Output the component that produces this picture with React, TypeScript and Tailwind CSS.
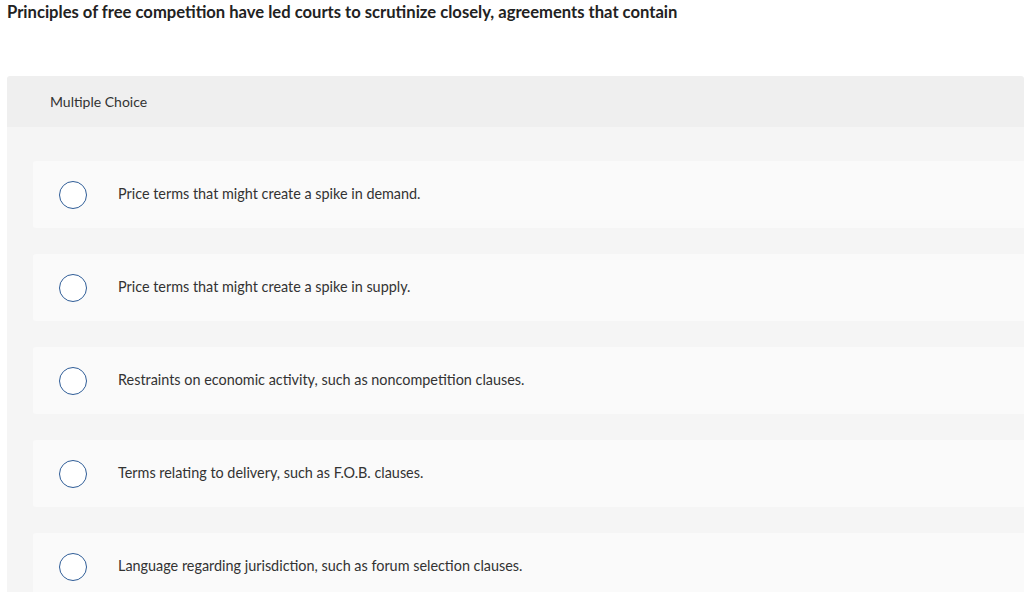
const options = [
  "Price terms that might create a spike in demand.",
  "Price terms that might create a spike in supply.",
  "Restraints on economic activity, such as noncompetition clauses.",
  "Terms relating to delivery, such as F.O.B. clauses.",
  "Language regarding jurisdiction, such as forum selection clauses.",
]

export default function App() {
  return (
    <div className="min-h-screen bg-white font-['Lato',sans-serif] text-[#333]">
      <h1 className="px-[7px] pt-[2px] text-[16.6px] font-bold leading-[20px] text-[#222]">
        Principles of free competition have led courts to scrutinize closely, agreements that contain
      </h1>

      <div className="ml-[7px] mt-[54px]">
        {/* question type header */}
        <div className="flex h-[51px] items-center rounded-t-[3px] bg-[#efefef] pb-[1px] pl-[43px] text-[14px] text-[#333]">
          Multiple Choice
        </div>

        {/* answer list */}
        <div className="flex flex-col gap-[26px] bg-[#f5f5f5] pl-[26px] pt-[34px]">
          {options.map((text) => (
            <label
              key={text}
              className="flex h-[67px] cursor-pointer items-center rounded-l-[3px] bg-[#fafafa] pl-[26px]"
            >
              <span className="h-[28px] w-[28px] shrink-0 rounded-full border-[1.5px] border-[#2f5d97] bg-white" />
              <span className="mb-[2px] ml-[31px] text-[14.4px] text-[#333]">{text}</span>
            </label>
          ))}
        </div>
      </div>
    </div>
  )
}
